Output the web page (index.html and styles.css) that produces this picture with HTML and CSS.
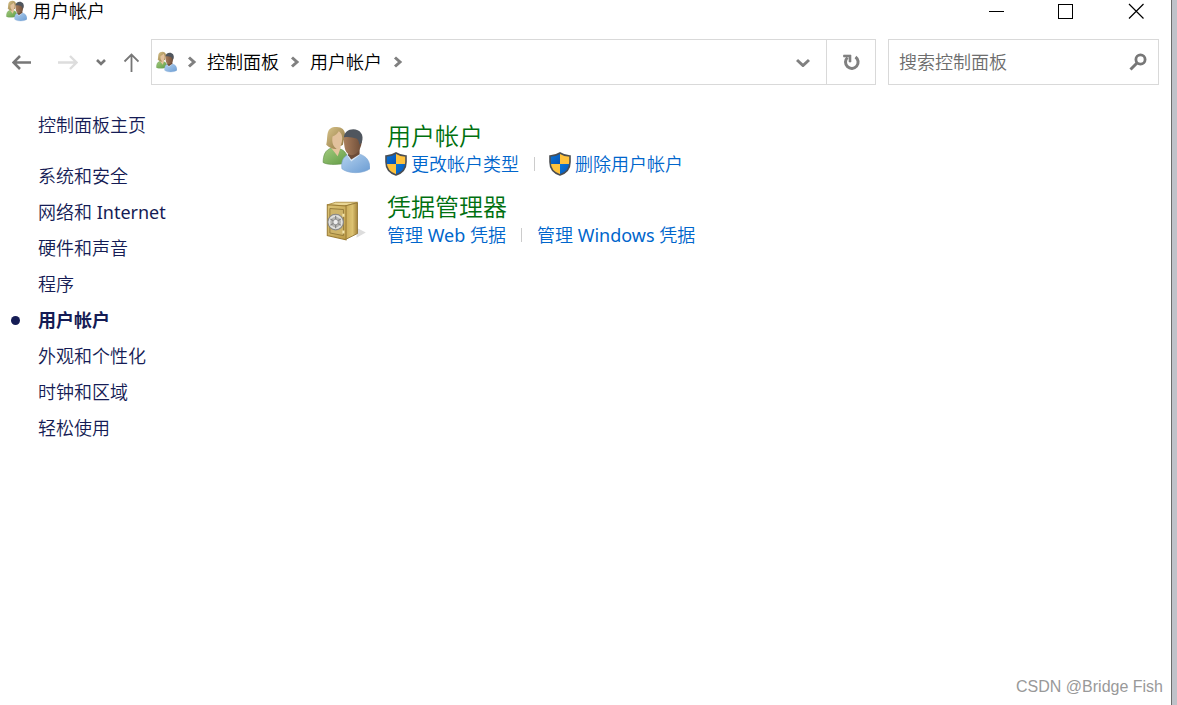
FILE: index.html
```html
<!DOCTYPE html>
<html lang="zh-CN">
<head>
  <meta charset="UTF-8">
  <title>用户帐户</title>
  <meta name="viewport" content="width=device-width, initial-scale=1.0">
  <link rel="stylesheet" href="styles.css">
</head>

<body>
  <!-- shared icons -->
  <svg class="sprite" aria-hidden="true">
    <defs>
      <linearGradient id="hairBlond" x1="0" y1="0" x2="1" y2="1">
        <stop offset="0" stop-color="#d8c48a" />
        <stop offset="1" stop-color="#8f7440" />
      </linearGradient>
      <linearGradient id="green" x1="0" y1="0" x2="1" y2="1">
        <stop offset="0" stop-color="#a4cc80" />
        <stop offset="1" stop-color="#5f9a42" />
      </linearGradient>
      <linearGradient id="blue" x1="0" y1="0" x2="1" y2="1">
        <stop offset="0" stop-color="#b4d2ef" />
        <stop offset="1" stop-color="#6b9cd3" />
      </linearGradient>
      <linearGradient id="skinDark" x1="0" y1="0" x2="1" y2="0">
        <stop offset="0" stop-color="#a97e5c" />
        <stop offset="1" stop-color="#6d4c38" />
      </linearGradient>
      <linearGradient id="shieldBlue" x1="0" y1="0" x2="1" y2="1">
        <stop offset="0" stop-color="#0a78d8" />
        <stop offset="1" stop-color="#0651b5" />
      </linearGradient>
      <linearGradient id="goldFront" x1="0" y1="0" x2="1" y2="1">
        <stop offset="0" stop-color="#dcc478" />
        <stop offset="1" stop-color="#bd9c48" />
      </linearGradient>
      <linearGradient id="goldSide" x1="0" y1="0" x2="1" y2="0">
        <stop offset="0" stop-color="#c9aa58" />
        <stop offset="0.6" stop-color="#dcc272" />
        <stop offset="1" stop-color="#a5843a" />
      </linearGradient>
    </defs>
    <symbol id="users" viewBox="0 0 48 48">
      <path d="M3 36C3 29 5 24 11 22L19 23C24 24 27 29 27 36C20 38 8 39 3 36Z" fill="url(#green)" stroke="#5d8d45" stroke-width=".6" />
      <path d="M10 21L17 30L20 21Z" fill="#e6c49d" />
      <path d="M6 19C8 12 5 3 14 2C20 1 24 4 24 9L22 19L15 23C12 23 9 22 6 19Z" fill="url(#hairBlond)" />
      <path d="M12 11C15 10 17 8 18 6C21 8 22 12 21 16C20 20 19 23 17 23C13 22 11 17 12 11Z" fill="#e2c19c" />
      <path d="M21 42C20 34 23 29 29 28L38 28C45 30 48 35 48 42C41 47 27 47 21 42Z" fill="url(#blue)" stroke="#7fa7d3" stroke-width=".6" />
      <path d="M26 29L30 35L39 28Z" fill="#d9e8f7" />
      <path d="M27 24L38 22V28L30 33L27 29Z" fill="#6d4c38" />
      <path d="M23 14C23 8 27 6 32 6C38 6 41 11 40 17C39 24 35 29 30 29C24 28 23 21 23 14Z" fill="url(#skinDark)" />
      <path d="M23 12C23 7 27 4 32 4C38 4 43 9 40 17L38 19C37 16 37 14 35 13C31 12 27 11 23 12Z" fill="#50565e" />
    </symbol>
    <symbol id="shield" viewBox="0 0 22 24">
      <path d="M11 1C14 3 17 4 21 4V10C21 17 17 21 11 23C5 21 1 17 1 10V4C5 4 8 3 11 1Z" fill="#ffc23c" />
      <path d="M11 1V12H1V4C5 4 8 3 11 1Z" fill="url(#shieldBlue)" />
      <path d="M11 12H21C20 18 17 21 11 23Z" fill="url(#shieldBlue)" />
      <path d="M11 1C14 3 17 4 21 4V10C21 17 17 21 11 23C5 21 1 17 1 10V4C5 4 8 3 11 1Z" fill="none" stroke="#4b4e52" stroke-width="1.6" />
    </symbol>
    <symbol id="chevron" viewBox="0 0 10 12">
      <path d="M2 1.5L7 6L2 10.5" fill="none" stroke="#808080" stroke-width="3" />
    </symbol>
  </svg>

  <div class="window">
    <header class="titlebar">
      <svg class="icon-small"><use href="#users" /></svg>
      <h1>用户帐户</h1>
      <div class="window-controls">
        <button type="button" aria-label="最小化">
          <svg width="16" height="16" viewBox="0 0 16 16"><path d="M1 8.5H16" stroke="#000" /></svg>
        </button>
        <button type="button" aria-label="最大化">
          <svg width="16" height="16" viewBox="0 0 16 16"><rect x=".5" y="1.5" width="14" height="14" fill="none" stroke="#000" /></svg>
        </button>
        <button type="button" aria-label="关闭">
          <svg width="16" height="16" viewBox="0 0 16 16"><path d="M1 1L15.500 15.500M15.500 1L1 15.500" stroke="#000" stroke-width="1.200" /></svg>
        </button>
      </div>
    </header>

    <div class="toolbar">
      <nav class="history">
        <button type="button" aria-label="后退">
          <svg width="20" height="16" viewBox="0 0 20 16"><path d="M1.500 8.500H19M8 2L1.500 8.500L8 15" fill="none" stroke="#777" stroke-width="2.600" /></svg>
        </button>
        <button type="button" aria-label="前进" disabled>
          <svg width="20" height="16" viewBox="0 0 20 16"><path d="M0 8.500H18.500M12 2L18.500 8.500L12 15" fill="none" stroke="#ddd" stroke-width="2.400" /></svg>
        </button>
        <button type="button" class="recent" aria-label="最近浏览的位置">
          <svg width="10" height="8" viewBox="0 0 10 8"><path d="M1 2L5 6L9 2" fill="none" stroke="#777" stroke-width="2.600" /></svg>
        </button>
        <button type="button" class="up" aria-label="向上">
          <svg width="16" height="20" viewBox="0 0 16 20"><path d="M8.500 2.500V20M1.500 9.500L8.500 2.500L15.500 9.500" fill="none" stroke="#777" stroke-width="1.800" /></svg>
        </button>
      </nav>

      <div class="address">
        <svg class="icon-small"><use href="#users" /></svg>
        <svg class="chevron"><use href="#chevron" /></svg>
        <a href="#">控制面板</a>
        <svg class="chevron"><use href="#chevron" /></svg>
        <a href="#">用户帐户</a>
        <svg class="chevron"><use href="#chevron" /></svg>
        <button type="button" class="dropdown" aria-label="以前的位置">
          <svg width="14" height="10" viewBox="0 0 14 10"><path d="M1 3L7 8.500L13 3" fill="none" stroke="#808080" stroke-width="3" /></svg>
        </button>
        <button type="button" class="refresh" aria-label="刷新">
          <svg width="18" height="18" viewBox="0 0 18 18">
            <path d="M13.500 4A6.300 6.300 0 1 1 5.500 4.500" fill="none" stroke="#808080" stroke-width="3" />
            <path d="M1.500 2H9V9H7V4H1.500Z" fill="#808080" stroke="#808080" stroke-width=".6" />
          </svg>
        </button>
      </div>

      <form class="search">
        <input type="search" placeholder="搜索控制面板" aria-label="搜索控制面板">
        <button type="submit" aria-label="搜索">
          <svg width="18" height="18" viewBox="0 0 18 18">
            <circle cx="11.500" cy="6.500" r="4.600" fill="none" stroke="#777" stroke-width="2.800" />
            <path d="M8 10L1.500 16.500" stroke="#777" stroke-width="3" />
          </svg>
        </button>
      </form>
    </div>

    <div class="content">
      <nav class="sidebar">
        <a class="home" href="#">控制面板主页</a>
        <ul>
          <li><a href="#">系统和安全</a></li>
          <li><a href="#">网络和 <span lang="en">Internet</span></a></li>
          <li><a href="#">硬件和声音</a></li>
          <li><a href="#">程序</a></li>
          <li class="current"><a href="#">用户帐户</a></li>
          <li><a href="#">外观和个性化</a></li>
          <li><a href="#">时钟和区域</a></li>
          <li><a href="#">轻松使用</a></li>
        </ul>
      </nav>

      <main class="categories">
        <section class="category">
          <svg class="icon-large"><use href="#users" /></svg>
          <div>
            <h2><a href="#">用户帐户</a></h2>
            <ul class="tasks shielded">
              <li><svg class="shield"><use href="#shield" /></svg><a href="#">更改帐户类型</a></li>
              <li><svg class="shield"><use href="#shield" /></svg><a href="#">删除用户帐户</a></li>
            </ul>
          </div>
        </section>

        <section class="category">
          <!-- safe -->
          <svg class="icon-large" viewBox="0 0 48 48">
            <path d="M35 40L44 35L36 31Z" fill="#ddd" />
            <path d="M7 8.500L15 6H36L25 9.500Z" fill="#e8d594" stroke="#a98a3c" stroke-width=".8" />
            <path d="M24 9.500L36 6.500V36L24 42Z" fill="url(#goldSide)" stroke="#8d7130" stroke-width=".8" />
            <path d="M7 8.500L25 9.500V42L7 38Z" fill="url(#goldFront)" stroke="#9c7d35" />
            <path d="M9.500 12L22.500 13V38L9.500 35.500Z" fill="#ceb469" stroke="#8d7435" stroke-width=".8" />
            <path d="M22.500 17V20M22.500 33V36" stroke="#f5e6ae" stroke-width="2" />
            <circle cx="15" cy="25" r="7.500" fill="#b5b5b2" stroke="#888" />
            <circle cx="15" cy="25" r="6" fill="none" stroke="#e2e2df" stroke-width="1.600" />
            <path d="M15 19V31M10 22L20 28M20 22L10 28" stroke="#858585" stroke-width="1.200" />
            <circle cx="15" cy="25" r="2.600" fill="#eee" stroke="#888" stroke-width=".8" />
          </svg>
          <div>
            <h2><a href="#">凭据管理器</a></h2>
            <ul class="tasks">
              <li><a href="#">管理 <span lang="en">Web</span> 凭据</a></li>
              <li><a href="#">管理 <span lang="en">Windows</span> 凭据</a></li>
            </ul>
          </div>
        </section>
      </main>
    </div>

    <footer class="watermark">CSDN @Bridge Fish</footer>
  </div>
</body>
</html>
```
FILE: styles.css
```css
* {
  margin: 0;
  padding: 0;
  box-sizing: border-box;
}
body {
  font-family: "Noto Sans", "Noto Sans CJK SC", sans-serif;
  font-size: 18px;
  font-weight: 350;
  line-height: 24px;
  color: #000;
  background-color: #bfc2c9;
  padding-right: 5px;
}
[lang="en"] {
  font-weight: 400;
}
a {
  color: inherit;
  text-decoration: none;
}
a:hover {
  text-decoration: underline;
}
ul {
  list-style: none;
}
svg {
  display: block;
  flex: none;
}
button {
  display: flex;
  align-items: center;
  justify-content: center;
  border: none;
  background: none;
}
.sprite {
  position: absolute;
  width: 0;
  height: 0;
}
.window {
  display: flex;
  flex-direction: column;
  min-height: 100vh;
  background-color: #fff;
  border-right: 1px solid #6c6c6c;
}
.icon-small {
  width: 22px;
  height: 22px;
}

/* title bar */
.titlebar {
  display: flex;
  align-items: center;
  height: 22px;
  padding-left: 5px;
}
.titlebar h1 {
  margin-left: 6px;
  font-size: 18px;
  font-weight: inherit;
}
.window-controls {
  display: flex;
  margin-left: auto;
}
.window-controls button {
  width: 70px;
  height: 24px;
}

/* navigation and address bar */
.toolbar {
  display: flex;
  align-items: center;
  margin-top: 17px;
  padding-right: 12px;
}
.history {
  display: flex;
  width: 151px;
  padding-left: 12px;
}
.history button {
  width: 20px;
  height: 46px;
  margin-right: 26px;
}
.history .recent {
  width: 10px;
  margin: 0 17px 0 -8px;
}
.history .up {
  width: 16px;
  margin: 0;
}
.address {
  display: flex;
  flex: 1;
  align-items: center;
  height: 46px;
  padding-left: 3px;
  border: 1px solid #d9d9d9;
}
.chevron {
  width: 10px;
  height: 12px;
  margin: 0 10px 0 11px;
}
.icon-small + .chevron {
  margin-left: 10px;
}
.address .dropdown {
  width: 46px;
  height: 44px;
  margin-left: auto;
}
.address .refresh {
  width: 49px;
  height: 44px;
  border-left: 1px solid #d9d9d9;
}
.search {
  display: flex;
  width: 271px;
  height: 46px;
  margin-left: 12px;
  border: 1px solid #d9d9d9;
}
.search input {
  flex: 1;
  min-width: 0;
  padding-left: 10px;
  border: none;
  outline: none;
  font: inherit;
}
.search input::placeholder {
  color: #6d6d6d;
}
.search button {
  width: 40px;
}

/* page content */
.content {
  display: flex;
  flex: 1;
  padding-top: 28px;
}
.sidebar {
  width: 320px;
  padding-left: 38px;
  color: #151c55;
}
.home {
  display: block;
  margin-bottom: 27px;
}
.sidebar li {
  height: 24px;
  margin-bottom: 12px;
}
.sidebar .current {
  position: relative;
  font-weight: bold;
}
.current::before {
  content: "";
  position: absolute;
  left: -27px;
  top: 8px;
  width: 9px;
  height: 9px;
  border-radius: 50%;
  background-color: #151c55;
}
.categories {
  padding-top: 3px;
}
.category {
  display: flex;
  gap: 17px;
  margin-bottom: 11px;
}
.icon-large {
  width: 50px;
  height: 50px;
  margin-top: 9px;
}
.category h2 {
  font-size: 24px;
  font-weight: inherit;
  line-height: 32px;
  padding-top: 4px;
  color: #00700f;
}
.tasks {
  display: flex;
  color: #0066cc;
}
.tasks li {
  display: flex;
  align-items: center;
}
.tasks li + li::before {
  content: "";
  width: 1px;
  height: 14px;
  margin: 0 15px;
  background-color: #ccc;
}
.shield {
  width: 22px;
  height: 24px;
  margin-right: 4px;
}
.shielded {
  margin-left: -2px;
}
.tasks.shielded li + li::before {
  margin: 0 14px 0 15px;
}
.watermark {
  padding: 0 8px 6px;
  font-family: "Liberation Sans", Arial, sans-serif;
  font-size: 16px;
  text-align: right;
  color: #999;
}
```
